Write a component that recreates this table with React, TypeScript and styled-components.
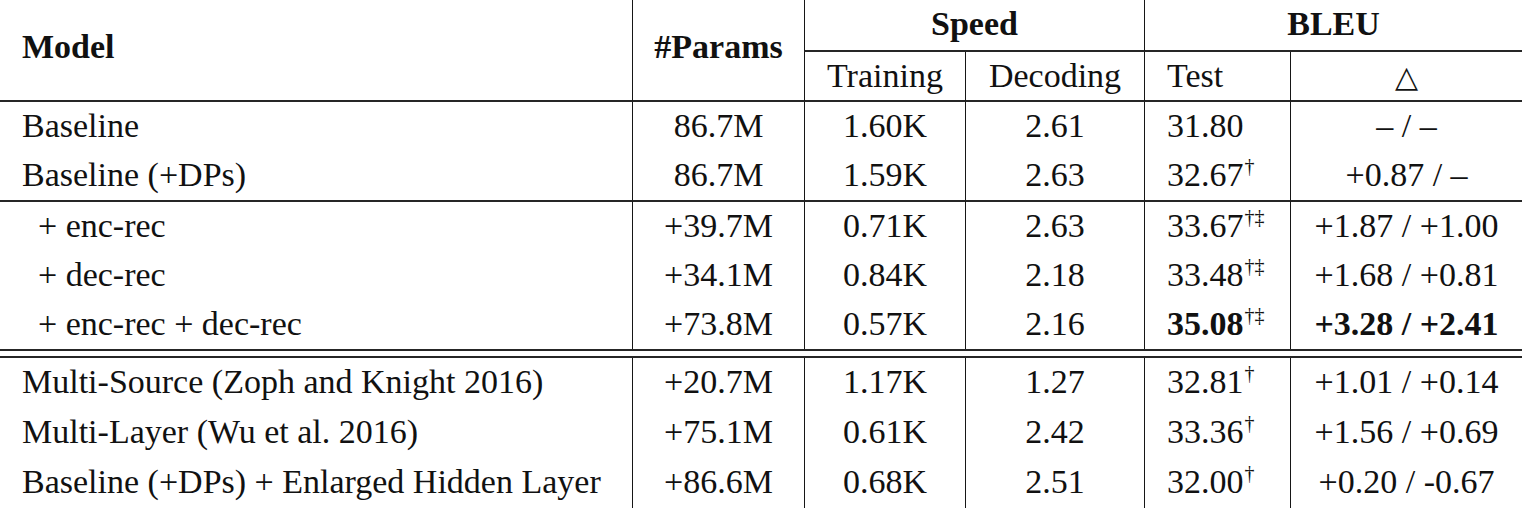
import React from "react";
import styled, { createGlobalStyle } from "styled-components";

const GlobalStyle = createGlobalStyle`
  html, body {
    margin: 0;
    padding: 0;
    background: #ffffff;
  }
  body {
    font-family: "Liberation Serif", "Times New Roman", serif;
    color: #111111;
  }
`;

const RULE = "2px solid #262626";
const VRULE = "1px solid #161616";

type Result = {
  model: string;
  params: string;
  train: string;
  dec: string;
  test: string;
  mark?: string;
  delta: string;
  indent?: boolean;
  best?: boolean;
};

const groups: Result[][] = [
  [
    { model: "Baseline", params: "86.7M", train: "1.60K", dec: "2.61", test: "31.80", delta: "– / –" },
    { model: "Baseline (+DPs)", params: "86.7M", train: "1.59K", dec: "2.63", test: "32.67", mark: "†", delta: "+0.87 / –" },
  ],
  [
    { model: "+ enc-rec", params: "+39.7M", train: "0.71K", dec: "2.63", test: "33.67", mark: "†‡", delta: "+1.87 / +1.00", indent: true },
    { model: "+ dec-rec", params: "+34.1M", train: "0.84K", dec: "2.18", test: "33.48", mark: "†‡", delta: "+1.68 / +0.81", indent: true },
    { model: "+ enc-rec + dec-rec", params: "+73.8M", train: "0.57K", dec: "2.16", test: "35.08", mark: "†‡", delta: "+3.28 / +2.41", indent: true, best: true },
  ],
  [
    { model: "Multi-Source (Zoph and Knight 2016)", params: "+20.7M", train: "1.17K", dec: "1.27", test: "32.81", mark: "†", delta: "+1.01 / +0.14" },
    { model: "Multi-Layer (Wu et al. 2016)", params: "+75.1M", train: "0.61K", dec: "2.42", test: "33.36", mark: "†", delta: "+1.56 / +0.69" },
    { model: "Baseline (+DPs) + Enlarged Hidden Layer", params: "+86.6M", train: "0.68K", dec: "2.51", test: "32.00", mark: "†", delta: "+0.20 / -0.67" },
  ],
];

const Table = styled.table`
  width: 1522px;
  table-layout: fixed;
  border-collapse: separate;
  border-spacing: 0;
  font-size: 34px;
  line-height: 1;
`;

const Row = styled.tr<{ $h: number }>`
  height: ${(p) => p.$h}px;
`;

const HeadCell = styled.th<{ $align?: "left" | "center"; $pad?: number; $first?: boolean; $lift?: number }>`
  padding: 0 0 ${(p) => p.$lift ?? 3}px ${(p) => p.$pad ?? 0}px;
  text-align: ${(p) => p.$align ?? "center"};
  border-left: ${(p) => (p.$first ? "none" : VRULE)};
  border-bottom: ${RULE};
  font-weight: 700;
  vertical-align: middle;
  white-space: nowrap;
`;

const SubHead = styled.th<{ $align?: "left" | "center"; $pad?: number }>`
  padding: 0 0 0 ${(p) => p.$pad ?? 0}px;
  text-align: ${(p) => p.$align ?? "center"};
  border-left: ${VRULE};
  border-bottom: ${RULE};
  font-weight: 400;
  vertical-align: middle;
  white-space: nowrap;
`;

const Cell = styled.td<{ $align?: "left" | "center"; $pad?: number; $first?: boolean; $top?: boolean; $bold?: boolean }>`
  padding: 0 0 2px ${(p) => p.$pad ?? 0}px;
  text-align: ${(p) => p.$align ?? "center"};
  border-left: ${(p) => (p.$first ? "none" : VRULE)};
  border-top: ${(p) => (p.$top ? RULE : "none")};
  font-weight: ${(p) => (p.$bold ? 700 : 400)};
  vertical-align: middle;
  white-space: nowrap;
`;

const Gap = styled.td`
  padding: 0;
  border-top: ${RULE};
  border-bottom: ${RULE};
`;

const Mark = styled.sup`
  font-size: 20px;
  font-weight: 400;
  line-height: 0;
  vertical-align: baseline;
  position: relative;
  top: -13px;
  margin-left: 1px;
`;

const Triangle = styled.span`
  font-family: "DejaVu Sans", sans-serif;
  font-size: 30px;
`;

const widths = [632, 172, 161, 179, 146, 232];

const DataRow: React.FC<{ r: Result; top: boolean; h: number }> = ({ r, top, h }) => (
  <Row $h={h}>
    <Cell $first $align="left" $pad={r.indent ? 38 : 22} $top={top}>
      {r.model}
    </Cell>
    <Cell $top={top}>{r.params}</Cell>
    <Cell $top={top}>{r.train}</Cell>
    <Cell $top={top}>{r.dec}</Cell>
    <Cell $top={top} $align="left" $pad={22} $bold={r.best}>
      {r.test}
      {r.mark && <Mark>{r.mark}</Mark>}
    </Cell>
    <Cell $top={top} $bold={r.best}>
      {r.delta}
    </Cell>
  </Row>
);

export default function App() {
  return (
    <>
      <GlobalStyle />
      <Table>
        <colgroup>
          {widths.map((w, i) => (
            <col key={i} style={{ width: w }} />
          ))}
        </colgroup>
        <thead>
          <Row $h={52}>
            <HeadCell rowSpan={2} $first $align="left" $pad={22} $lift={6}>
              Model
            </HeadCell>
            <HeadCell rowSpan={2} $lift={6}>
              #Params
            </HeadCell>
            <HeadCell colSpan={2}>Speed</HeadCell>
            <HeadCell colSpan={2}>BLEU</HeadCell>
          </Row>
          <Row $h={50}>
            <SubHead>Training</SubHead>
            <SubHead>Decoding</SubHead>
            <SubHead $align="left" $pad={22}>
              Test
            </SubHead>
            <SubHead>
              <Triangle>△</Triangle>
            </SubHead>
          </Row>
        </thead>
        <tbody>
          {groups[0].map((r) => (
            <DataRow key={r.model} r={r} top={false} h={49} />
          ))}
          {groups[1].map((r, i) => (
            <DataRow key={r.model} r={r} top={i === 0} h={i === 0 ? 51 : 49} />
          ))}
          <Row $h={9}>
            <Gap colSpan={6} />
          </Row>
          {groups[2].map((r) => (
            <DataRow key={r.model} r={r} top={false} h={50} />
          ))}
        </tbody>
      </Table>
    </>
  );
}
